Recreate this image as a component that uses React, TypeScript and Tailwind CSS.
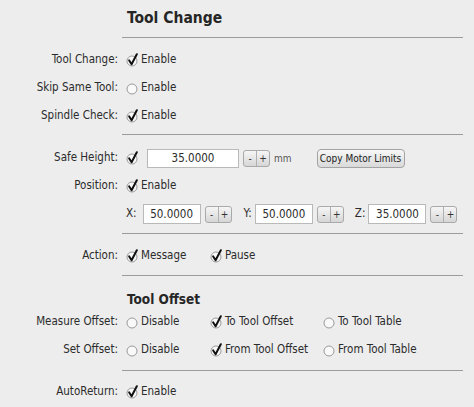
import React from "react";

const font = "font-['DejaVu_Sans_Condensed','DejaVu_Sans',sans-serif]";

// checked box: round well with a heavy tick drawn over it
const Check: React.FC = () => (
  <svg width="14" height="14" viewBox="0 0 14 14" className="shrink-0">
    <circle cx="6" cy="8" r="5" fill="#f9f9f9" stroke="#9a9a9a" strokeWidth="1" />
    <path d="M3.2 7.4 L5.6 11.3 L10.8 1.2" fill="none" stroke="#111" strokeWidth="2" strokeLinecap="round" strokeLinejoin="round" />
  </svg>
);

const Radio: React.FC = () => (
  <svg width="14" height="14" viewBox="0 0 14 14" className="shrink-0">
    <circle cx="6" cy="8" r="5" fill="#f9f9f9" stroke="#9a9a9a" strokeWidth="1" />
  </svg>
);

const Option: React.FC<{ on?: boolean; label: string; w?: string }> = ({ on, label, w }) => (
  <div className={`flex items-center gap-[1px] ${w ?? ""}`}>
    {on ? <Check /> : <Radio />}
    <span>{label}</span>
  </div>
);

const Row: React.FC<{ label: string; children: React.ReactNode }> = ({ label, children }) => (
  <div className="grid grid-cols-[126px_1fr] h-[28px] items-center">
    <div className="text-right pr-[8px]">{label}</div>
    <div className="flex items-center">{children}</div>
  </div>
);

const Rule: React.FC<{ cls: string }> = ({ cls }) => (
  <div className={`ml-[122px] w-[341px] border-t border-[#9c9c9c] ${cls}`} />
);

const Stepper: React.FC = () => (
  <div className="flex h-[17px] w-[27px] rounded-[3px] border border-[#a9a9a9] bg-gradient-to-b from-[#f6f6f6] to-[#d6d6d6] text-[10px] leading-[15px] text-[#333]">
    <span className="flex-1 text-center border-r border-[#b0b0b0]">-</span>
    <span className="flex-1 text-center">+</span>
  </div>
);

const Field: React.FC<{ value: string; w: string }> = ({ value, w }) => (
  <div className={`${w} border border-[#b9b9b9] bg-white text-center`}>{value}</div>
);

const Title: React.FC<{ text: string; cls: string }> = ({ text, cls }) => (
  <div className={`pl-[127px] font-bold text-[#262626] ${cls}`}>{text}</div>
);

export default function App() {
  return (
    <div className={`w-[474px] h-[407px] overflow-hidden bg-[#ededed] text-[11.5px] text-[#2b2b2b] ${font}`}>
      <div className="pt-[4px]">
        <Title text="Tool Change" cls="h-[28px] leading-[28px] text-[15.5px]" />
        <Rule cls="mt-[5px] mb-[8px]" />

        <Row label="Tool Change:"><Option on label="Enable" /></Row>
        <Row label="Skip Same Tool:"><Option label="Enable" /></Row>
        <Row label="Spindle Check:"><Option on label="Enable" /></Row>

        <Rule cls="mt-[4px] mb-[9px]" />

        <Row label="Safe Height:">
          <Check />
          <Field value="35.0000" w="w-[92px] ml-[7px] h-[19px] leading-[17px]" />
          <div className="ml-[4px]"><Stepper /></div>
          <span className="ml-[4px] text-[10px] text-[#555]">mm</span>
          <button className="ml-[25px] h-[19px] w-[88px] rounded-[4px] border border-[#a3a3a3] bg-gradient-to-b from-[#f7f7f7] to-[#d9d9d9] text-[10px] text-[#222] leading-[17px]">
            Copy Motor Limits
          </button>
        </Row>
        <Row label="Position:"><Option on label="Enable" /></Row>
        <Row label="">
          <span>X:</span>
          <Field value="50.0000" w="w-[58px] ml-[6px] h-[20px] leading-[18px]" />
          <div className="ml-[4px]"><Stepper /></div>
          <span className="ml-[12px]">Y:</span>
          <Field value="50.0000" w="w-[58px] ml-[3px] h-[20px] leading-[18px]" />
          <div className="ml-[4px]"><Stepper /></div>
          <span className="ml-[11px]">Z:</span>
          <Field value="35.0000" w="w-[58px] ml-[3px] h-[20px] leading-[18px]" />
          <div className="ml-[4px]"><Stepper /></div>
        </Row>

        <Rule cls="mt-[5px] mb-[8px]" />

        <Row label="Action:">
          <Option on label="Message" w="w-[84px]" />
          <Option on label="Pause" />
        </Row>

        <Rule cls="mt-[5px] mb-[9px]" />

        <Title text="Tool Offset" cls="h-[23px] pt-[6px] leading-[17px] text-[13.5px]" />
        <Row label="Measure Offset:">
          <Option label="Disable" w="w-[84px]" />
          <Option on label="To Tool Offset" w="w-[113px]" />
          <Option label="To Tool Table" />
        </Row>
        <Row label="Set Offset:">
          <Option label="Disable" w="w-[84px]" />
          <Option on label="From Tool Offset" w="w-[113px]" />
          <Option label="From Tool Table" />
        </Row>

        <Rule cls="mt-[6px] mb-[7px]" />

        <Row label="AutoReturn:"><Option on label="Enable" /></Row>
      </div>
    </div>
  );
}
